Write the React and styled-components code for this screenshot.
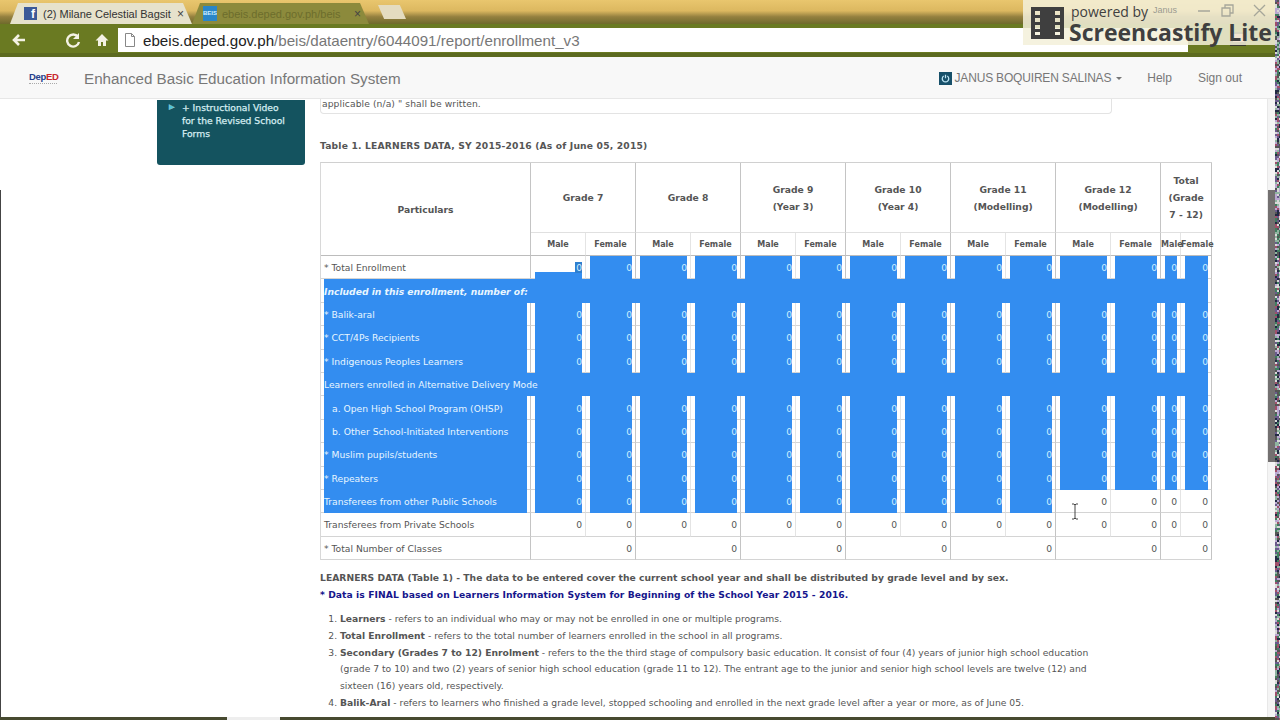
import React from 'react';
import styled, { createGlobalStyle } from 'styled-components';

const Global = createGlobalStyle`
  html, body { margin: 0; padding: 0; background: #fff; }
  * { box-sizing: border-box; }
`;
const BLUE = '#338df0';
const VERDANA = '"DejaVu Sans", Verdana, sans-serif';
const ARIAL = '"Liberation Sans", Arial, sans-serif';

const Page = styled.div`
  position: relative; width: 1280px; height: 720px; overflow: hidden;
  display: flex; flex-direction: column; background: #fff; font-family: ${VERDANA};
`;
const TabStrip = styled.div`
  height: 24px; flex: none; display: flex; align-items: flex-end; padding: 3px 0 0 10px;
  background: linear-gradient(180deg, #e9c66e 0%, #dcb860 45%, #94803f 70%, #6f6a2c 100%);
`;
const Tab = styled.div`
  width: ${p => p.$w}px; height: 21px; margin-right: ${p => p.$mr || 0}px; flex: none;
  display: flex; align-items: center; gap: ${p => p.$gap}px; padding-left: ${p => p.$pl}px; white-space: nowrap;
  clip-path: polygon(0 100%, 8px 0, calc(100% - 9px) 0, 100% 100%);
  background: ${p => p.$active ? '#e6e2cc' : '#8c8a3c'};
  font: 11px ${ARIAL}; color: ${p => p.$active ? '#333' : '#6d6d2c'};
`;
const NewTab = styled.div`
  width: 28px; height: 14px; margin: 0 0 5px 9px; background: #e4dcc0; flex: none;
  clip-path: polygon(0 0, 78% 0, 100% 100%, 22% 100%);
`;
const TabClose = styled.span`margin-left: auto; margin-right: 8px; font-size: 12px; color: #444;`;
const FbIcon = styled.span`
  width: 13px; height: 13px; background: #3b5998; color: #fff; flex: none;
  font: bold 12px/14px ${ARIAL}; text-align: right; padding-right: 2px; overflow: hidden;
`;
const BeisIcon = styled.span`
  width: 14px; height: 15px; background: #2a86c8; color: #cfefff; flex: none;
  font: bold 6px/15px ${ARIAL}; text-align: center; overflow: hidden;
`;
const Toolbar = styled.div`
  height: 33px; flex: none; display: flex; align-items: flex-start; padding-top: 4px;
  background: #6a7a22; border-bottom: 4px solid #5c6a20;
`;
const ToolIcons = styled.div`
  width: 118px; height: 24px; flex: none; display: flex; align-items: center; padding-left: 11px;
`;
const ToolIcon = styled.svg`width: 16px; height: 16px; margin-left: ${p => p.$ml || 0}px; flex: none;`;
const Address = styled.div`
  width: 1070px; height: 24px; background: #fff; display: flex; align-items: center; gap: 5px;
  padding-left: 4px; font: 15.15px ${ARIAL}; color: #777; flex: none;
  b { font-weight: 400; color: #222; }
`;
const ExtIcon = styled.svg`width: 16px; height: 14px; margin: 4px 0 0 42px; flex: none;`;
const Nav = styled.div`
  height: 42px; flex: none; display: flex; align-items: center; background: #f8f8f8;
  border-bottom: 1px solid #e7e7e7; padding: 1px 38px 0 29px; font-family: ${ARIAL}; color: #777;
`;
const Logo = styled.div`
  width: 55px; flex: none; font: bold 9.5px/10px ${ARIAL}; letter-spacing: -0.3px; color: #26408b;
  i { font-style: normal; color: #c8262c; }
  span { display: block; width: 28px; border-bottom: 1px dotted #aaa; height: 2px; }
`;
const Brand = styled.div`font-size: 15.2px; color: #777;`;
const NavRight = styled.div`margin-left: auto; display: flex; align-items: center; font-size: 12px;`;
const Power = styled.span`
  width: 13px; height: 13px; background: #17506a; display: flex; align-items: center; justify-content: center; margin-right: 3px;
`;
const UserName = styled.span`letter-spacing: -0.18px;`;
const Caret = styled.span`
  display: inline-block; margin: 0 25px 0 5px; border-left: 3px solid transparent; border-right: 3px solid transparent; border-top: 3px solid #777;
`;
const NavLink = styled.span`margin-right: ${p => p.$mr || 0}px;`;
const Body = styled.div`flex: 1; min-height: 0; display: flex; padding-left: 157px;`;
const Sidebar = styled.div`
  width: 148px; height: 65px; margin-top: 1px; flex: none; background: #14535f; border-radius: 0 0 3px 3px;
  display: flex; padding: 1px 18px 0 12px; color: #d6eef2; font: 400 9.2px/13px ${VERDANA}; -webkit-text-stroke: 0.25px #d6eef2;
`;
const SideArrow = styled.span`width: 13px; flex: none; font-size: 7px; color: #4fc3d8;`;
const Main = styled.div`width: 892px; margin-left: 15px; flex: none; font-size: 9.2px; color: #555;`;
const Notice = styled.div`
  width: 792px; height: 15px; padding-left: 1px; line-height: 8px; letter-spacing: 0.08px;
  border: 1px solid #e3e3e3; border-top: 0; border-radius: 0 0 4px 4px;
  display: flex; align-items: flex-end; padding-bottom: 5px;
`;
const Caption = styled.div`margin: 26px 0 10px; font-weight: 700; line-height: 12px; color: #555; letter-spacing: 0.17px;`;
const Table = styled.table`
  width: 892px; table-layout: fixed; border-collapse: separate; border-spacing: 0;
  border-top: 1px solid #d0d0d0; border-left: 1px solid #d8d8d8;
`;
const Th = styled.th`
  padding: 0; height: ${p => p.$h}px; font-weight: 700; text-align: center; line-height: 17px; color: #555;
  font-size: ${p => p.$small ? '8px' : 'inherit'};
  border-right: 1px solid ${p => p.$soft ? '#e4e4e4' : '#c4c4c4'};
  border-bottom: 1px solid ${p => p.$strong ? '#bcbcbc' : '#e0e0e0'};
`;
const Td = styled.td`
  padding: 0 3px 0 ${p => p.$lead ? 3 : 4}px; height: 23.4px;
  border-right: 1px solid ${p => p.$soft ? '#e4e4e4' : '#c4c4c4'};
  border-bottom: 1px solid #d4d4d4;
`;
const Field = styled.div`
  position: relative; height: 23.4px; margin-bottom: -1px;
  display: flex; align-items: center; justify-content: ${p => p.$right ? 'flex-end' : 'flex-start'};
  padding: ${p => p.$right ? '0' : `0 0 0 ${p.$indent || 0}px`};
  background: ${p => p.$on ? BLUE : 'transparent'};
  color: ${p => p.$on ? (p.$right ? '#cdf0ff' : '#e8f6ff') : '#555'};
  font-weight: ${p => p.$bold ? 700 : 400};
  font-style: ${p => p.$bold ? 'italic' : 'normal'};
  white-space: nowrap;
`;
const PartialField = styled(Field)`
  background: linear-gradient(180deg, transparent 0, transparent 16.5px, ${BLUE} 16.5px);
  align-items: flex-start;
  span { background: #2f7fcf; color: #d6f2ff; height: 11px; line-height: 11px; margin-top: 5.5px; padding: 0 0 0 1px; }
`;
const Notes = styled.div`margin-top: 9px; line-height: 17px;`;
const NoteHead = styled.div`
  font-weight: 700; letter-spacing: ${p => p.$navy ? '0.07px' : '0.03px'}; color: ${p => p.$navy ? '#16168c' : '#555'};
`;
const List = styled.ol`
  margin: 8px 0 0; padding: 0 115px 0 20px; line-height: 16.8px;
  b { font-weight: 700; }
`;
const Scrollbar = styled.div`
  position: absolute; top: 99px; right: 5px; bottom: 0; width: 8px; background: #f4f4f4; border-left: 1px solid #e8e8e8;
`;
const Thumb = styled.div`margin-top: 91px; height: 272px; background: #737070;`;
const Noise = styled.svg`position: absolute; top: 0; right: 0; width: 5px; height: 720px;`;
const LeftEdge = styled.div`position: absolute; left: 0; top: 190px; bottom: 0; width: 1px; background: #444;`;
const BottomEdge = styled.div`position: absolute; left: 0; right: 5px; bottom: 0; height: 3px; background: #474a30;`;
const BottomChip = styled.div`position: absolute; left: 227px; bottom: 0; width: 53px; height: 3px; background: #eee;`;
const Cursor = styled.svg`position: absolute; left: 1071px; top: 503px; width: 8px; height: 17px;`;
const Watermark = styled.div`
  position: absolute; top: 0; left: 1023px; right: 5px; height: 45px;
  background: rgba(243, 240, 218, 0.86); display: flex; padding: 7px 0 0 8px; color: #3f3f3f;
`;
const Film = styled.svg`width: 33px; height: 32px; flex: none;`;
const MarkText = styled.div`margin-left: 5px; position: relative; flex: 1;`;
const Powered = styled.div`font: 14px/15px "Open Sans", sans-serif; padding-left: 2px; margin-top: -3px;`;
const Brandmark = styled.div`font: 700 23px/26px "Open Sans", sans-serif; white-space: nowrap;`;
const WinLabel = styled.span`position: absolute; left: 84px; top: -3px; font: 9px/12px ${ARIAL}; color: #9a9a90;`;
const WinControls = styled.svg`position: absolute; left: 127px; top: -4px; width: 72px; height: 15px;`;

const rnd = (() => { let s = 12345; return () => (s = (s * 16807) % 2147483647) / 2147483647; })();
const COLORS = ['#6a5a8c', '#3f7f5f', '#d8d8d8', '#222a44', '#a04f6a', '#8fb4a0', '#555', '#b9a7d0'];
const noise = Array.from({ length: 720 }, (_, y) => [0, 2, 4].map(x => ({ x, y, c: COLORS[Math.floor(rnd() * COLORS.length)] })))
  .filter(r => r[0].y % 2 === 0).flat();

const GRADES = [
  ['Grade 7'], ['Grade 8'], ['Grade 9', '(Year 3)'], ['Grade 10', '(Year 4)'],
  ['Grade 11', '(Modelling)'], ['Grade 12', '(Modelling)'],
];
const ROWS = [
  { label: '* Total Enrollment', on: 'first' },
  { label: 'Included in this enrollment, number of:', span: true, bold: true },
  { label: '* Balik-aral', on: 14 },
  { label: '* CCT/4Ps Recipients', on: 14 },
  { label: '* Indigenous Peoples Learners', on: 14 },
  { label: 'Learners enrolled in Alternative Delivery Mode', span: true },
  { label: 'a. Open High School Program (OHSP)', on: 14, indent: 8 },
  { label: 'b. Other School-Initiated Interventions', on: 14, indent: 8 },
  { label: '* Muslim pupils/students', on: 14 },
  { label: '* Repeaters', on: 14 },
  { label: 'Transferees from other Public Schools', on: 10 },
  { label: 'Transferees from Private Schools', on: 0 },
];
const WIDTHS = [210, 55, 50, 55, 50, 55, 50, 55, 50, 55, 50, 55, 50, 20, 31];

function DataRow({ row }) {
  if (row.span) {
    return (
      <tr>
        <Td $lead colSpan={15}><Field $on $bold={row.bold}>{row.label}</Field></Td>
      </tr>
    );
  }
  const first = row.on === 'first';
  return (
    <tr>
      <Td $lead><Field $on={!first && row.on > 0} $indent={row.indent}>{row.label}</Field></Td>
      {WIDTHS.slice(1).map((_, i) => {
        const soft = i % 2 === 0;
        if (first && i === 0) {
          return <Td key={i} $soft={soft}><PartialField $right><span>0</span></PartialField></Td>;
        }
        const on = first || i < row.on;
        return <Td key={i} $soft={soft}><Field $right $on={on}>0</Field></Td>;
      })}
    </tr>
  );
}

export default function App() {
  return (
    <Page>
      <Global />
      <TabStrip>
        <Tab $w={182} $gap={6} $pl={14} $active><FbIcon>f</FbIcon>(2) Milane Celestial Bagsit<TabClose>×</TabClose></Tab>
        <Tab $w={177} $gap={5} $pl={11}><BeisIcon>BEIS</BeisIcon>ebeis.deped.gov.ph/beis<TabClose>×</TabClose></Tab>
        <NewTab />
      </TabStrip>
      <Toolbar>
        <ToolIcons>
          <ToolIcon viewBox="0 0 16 16"><path d="M14 8H4M8 3L3 8l5 5" fill="none" stroke="#f4f2e4" strokeWidth="2.6" /></ToolIcon>
          <ToolIcon $ml={38} viewBox="0 0 16 16"><path d="M13 5a6 6 0 1 0 1 5" fill="none" stroke="#f4f2e4" strokeWidth="2.4" /><path d="M14 1v6H8z" fill="#f4f2e4" /></ToolIcon>
          <ToolIcon $ml={13} viewBox="0 0 16 16"><path d="M8 2L1.5 8.5H4V14h3v-4h2v4h3V8.5h2.5z" fill="#f4f2e4" /></ToolIcon>
        </ToolIcons>
        <Address>
          <ToolIcon viewBox="0 0 16 16"><path d="M3.5 1.5h6l3 3v10h-9zM9.5 1.5v3h3" fill="#fff" stroke="#888" /></ToolIcon>
          <span><b>ebeis.deped.gov.ph</b>/beis/dataentry/6044091/report/enrollment_v3</span>
        </Address>
        <ExtIcon viewBox="0 0 16 14"><path d="M0 0h16v14H0z" fill="#3a3a30" /><path d="M3 2h11v8H3z" fill="#f0a0a8" /></ExtIcon>
      </Toolbar>
      <Nav>
        <Logo>Dep<i>ED</i><span /></Logo>
        <Brand>Enhanced Basic Education Information System</Brand>
        <NavRight>
          <Power>
            <svg width="9" height="9" viewBox="0 0 10 10"><path d="M3 2.2a3.6 3.6 0 1 0 4 0M5 .8v4" fill="none" stroke="#bfe6f5" strokeWidth="1.4" /></svg>
          </Power>
          <UserName>JANUS BOQUIREN SALINAS</UserName><Caret />
          <NavLink $mr={26}>Help</NavLink>
          <NavLink>Sign out</NavLink>
        </NavRight>
      </Nav>
      <Body>
        <Sidebar>
          <SideArrow>▶</SideArrow>
          <div>+ Instructional Video for the Revised School Forms</div>
        </Sidebar>
        <Main>
          <Notice>applicable (n/a) " shall be written.</Notice>
          <Caption>Table 1. LEARNERS DATA, SY 2015-2016 (As of June 05, 2015)</Caption>
          <Table>
            <colgroup>{WIDTHS.map((w, i) => <col key={i} style={{ width: w }} />)}</colgroup>
            <thead>
              <tr>
                <Th rowSpan={2} $h={70} $strong>Particulars</Th>
                {GRADES.map(g => (
                  <Th key={g[0]} colSpan={2} $h={70}>{g[0]}{g[1] && <br />}{g[1]}</Th>
                ))}
                <Th colSpan={2} $h={70}>Total<br />(Grade<br />7 - 12)</Th>
              </tr>
              <tr>
                {WIDTHS.slice(1).map((_, i) => (
                  <Th key={i} $h={23} $small $strong $soft={i % 2 === 0}>{i % 2 === 0 ? 'Male' : 'Female'}</Th>
                ))}
              </tr>
            </thead>
            <tbody>
              {ROWS.map(r => <DataRow key={r.label} row={r} />)}
              <tr>
                <Td $lead><Field>* Total Number of Classes</Field></Td>
                {GRADES.map(g => <Td key={g[0]} colSpan={2}><Field $right>0</Field></Td>)}
                <Td colSpan={2}><Field $right>0</Field></Td>
              </tr>
            </tbody>
          </Table>
          <Notes>
            <NoteHead>LEARNERS DATA (Table 1) - The data to be entered cover the current school year and shall be distributed by grade level and by sex.</NoteHead>
            <NoteHead $navy>* Data is FINAL based on Learners Information System for Beginning of the School Year 2015 - 2016.</NoteHead>
            <List>
              <li><b>Learners</b> - refers to an individual who may or may not be enrolled in one or multiple programs.</li>
              <li><b>Total Enrollment</b> - refers to the total number of learners enrolled in the school in all programs.</li>
              <li><b>Secondary (Grades 7 to 12) Enrolment</b> - refers to the the third stage of compulsory basic education. It consist of four (4) years of junior high school education (grade 7 to 10) and two (2) years of senior high school education (grade 11 to 12). The entrant age to the junior and senior high school levels are twelve (12) and sixteen (16) years old, respectively.</li>
              <li><b>Balik-Aral</b> - refers to learners who finished a grade level, stopped schooling and enrolled in the next grade level after a year or more, as of June 05.</li>
            </List>
          </Notes>
        </Main>
      </Body>
      <Scrollbar><Thumb /></Scrollbar>
      <Noise viewBox="0 0 5 720">
        {noise.map((n, i) => <rect key={i} x={n.x} y={n.y} width="2" height="2" fill={n.c} />)}
      </Noise>
      <LeftEdge />
      <BottomEdge /><BottomChip />
      <Cursor viewBox="0 0 8 17"><path d="M1 1h2l1 1 1-1h2M4 2v13M1 16h2l1-1 1 1h2" fill="none" stroke="#444" /></Cursor>
      <Watermark>
        <Film viewBox="0 0 33 32">
          <path fillRule="evenodd" fill="#3f3f3f" d="M0 0h33v32H0zM4 4v4h5V4zM4 11v4h5v-4zM4 18v4h5v-4zM4 25v3h5v-3zM24 4v4h5V4zM24 11v4h5v-4zM24 18v4h5v-4zM24 25v3h5v-3z" />
        </Film>
        <MarkText>
          <Powered>powered by</Powered>
          <Brandmark>Screencastify Lite</Brandmark>
          <WinLabel>Janus</WinLabel>
          <WinControls viewBox="0 0 72 15">
            <path d="M2 8h12M26 5h8v8h-8zM29 5V2h8v8h-3M58 2l11 11M69 2L58 13" fill="none" stroke="#a6a69a" strokeWidth="1.3" />
          </WinControls>
        </MarkText>
      </Watermark>
    </Page>
  );
}
